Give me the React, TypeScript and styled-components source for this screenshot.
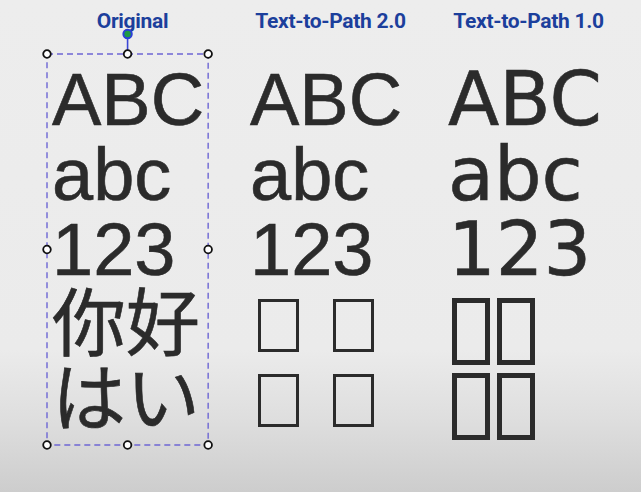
import React from 'react';
import styled, {createGlobalStyle} from 'styled-components';

const GlobalStyle = createGlobalStyle`
  html, body {
    margin: 0;
    padding: 0;
  }
  body {
    background: #ececec;
    font-family: "Liberation Sans", Arial, sans-serif;
  }
`;

const Page = styled.div`
  width: 641px;
  height: 492px;
  box-sizing: border-box;
  padding-left: 33px;
  display: flex;
  overflow: hidden;
  background: linear-gradient(to bottom, #ededed 0px, #ebebeb 350px, #dedede 420px, #cdcdcd 492px);
`;

const Column = styled.section`
  width: 198px;
  display: flex;
  flex-direction: column;
  align-items: flex-start;
`;

const Heading = styled.h2`
  align-self: stretch;
  margin: 8px 0 0;
  height: 26px;
  line-height: 27px;
  text-align: center;
  font-family: Roboto, "Noto Sans", sans-serif;
  font-weight: 700;
  font-size: 21px;
  letter-spacing: -0.3px;
  color: #1c3f9c;
  padding-left: 1px;
`;

const Sample = styled.div<{ $font: string; $size: number }>`
  position: relative;
  margin: 28px 0 0 19px;
  font-family: ${p => p.$font};
  font-size: ${p => p.$size}px;
  line-height: 75px;
  color: #2b2b2b;
  -webkit-text-stroke: 0.6px #2b2b2b;
`;

const Line = styled.div`
  height: 75px;
  white-space: nowrap;
`;

const TofuLine = styled.div<{ $left: number; $top: number; $gap: number }>`
  height: 75px;
  box-sizing: border-box;
  display: flex;
  gap: ${p => p.$gap}px;
  padding: ${p => p.$top}px 0 0 ${p => p.$left}px;
`;

const Tofu = styled.span<{ $w: number; $h: number; $stroke: number }>`
  display: block;
  box-sizing: border-box;
  width: ${p => p.$w}px;
  height: ${p => p.$h}px;
  border: ${p => p.$stroke}px solid #2b2b2b;
`;

const Frame = styled.svg`
  position: absolute;
  top: -8px;
  bottom: -8px;
  left: -5px;
  right: -4px;
  width: calc(100% + 9px);
  height: calc(100% + 16px);
  overflow: visible;
  pointer-events: none;
`;

const handles: [string, string][] = [
  ['0%', '0%'], ['50%', '0%'], ['100%', '0%'],
  ['0%', '50%'], ['100%', '50%'],
  ['0%', '100%'], ['50%', '100%'], ['100%', '100%'],
];

const SelectionFrame = () => (
  <Frame>
    <rect x="0" y="0" width="100%" height="100%" fill="none" stroke="#6d66d4" strokeWidth="1.4" strokeDasharray="6 4" />
    <line x1="50%" y1="-16" x2="50%" y2="0" stroke="#3b47d6" strokeWidth="1.6" />
    <circle cx="50%" cy="-20" r="4.2" fill="#1f9a45" stroke="#2b3fd8" strokeWidth="2" />
    {handles.map(([x, y]) => (
      <circle key={x + y} cx={x} cy={y} r="3.8" fill="#ffffff" stroke="#111111" strokeWidth="1.8" />
    ))}
  </Frame>
);

interface TofuSpec {
  left: number
  top: number
  gap: number
  w: number
  h: number
  stroke: number
}

const MissingGlyphs = ({chars, spec}: { chars: string; spec: TofuSpec }) => (
  <TofuLine $left={spec.left} $top={spec.top} $gap={spec.gap} aria-label={chars}>
    {Array.from(chars).map((c, i) => (
      <Tofu key={i} $w={spec.w} $h={spec.h} $stroke={spec.stroke} title={c} />
    ))}
  </TofuLine>
);

const v2: TofuSpec = {left: 8, top: 12, gap: 34, w: 41, h: 53, stroke: 3};
const v1: TofuSpec = {left: 4, top: 11, gap: 7, w: 38, h: 67, stroke: 5};

export default function App() {
  return (
    <>
      <GlobalStyle />
      <Page>
        <Column>
          <Heading>Original</Heading>
          <Sample $font={'"Liberation Sans", "Noto Sans CJK SC", "Noto Sans CJK JP", sans-serif'} $size={74}>
            <Line>ABC</Line>
            <Line>abc</Line>
            <Line>123</Line>
            <Line>你好</Line>
            <Line>はい</Line>
            <SelectionFrame />
          </Sample>
        </Column>
        <Column>
          <Heading>Text-to-Path 2.0</Heading>
          <Sample $font={'"Liberation Sans", sans-serif'} $size={74}>
            <Line>ABC</Line>
            <Line>abc</Line>
            <Line>123</Line>
            <MissingGlyphs chars="你好" spec={v2} />
            <MissingGlyphs chars="はい" spec={v2} />
          </Sample>
        </Column>
        <Column>
          <Heading>Text-to-Path 1.0</Heading>
          <Sample $font={'"DejaVu Sans", sans-serif'} $size={75}>
            <Line>ABC</Line>
            <Line>abc</Line>
            <Line>123</Line>
            <MissingGlyphs chars="你好" spec={v1} />
            <MissingGlyphs chars="はい" spec={v1} />
          </Sample>
        </Column>
      </Page>
    </>
  );
}
